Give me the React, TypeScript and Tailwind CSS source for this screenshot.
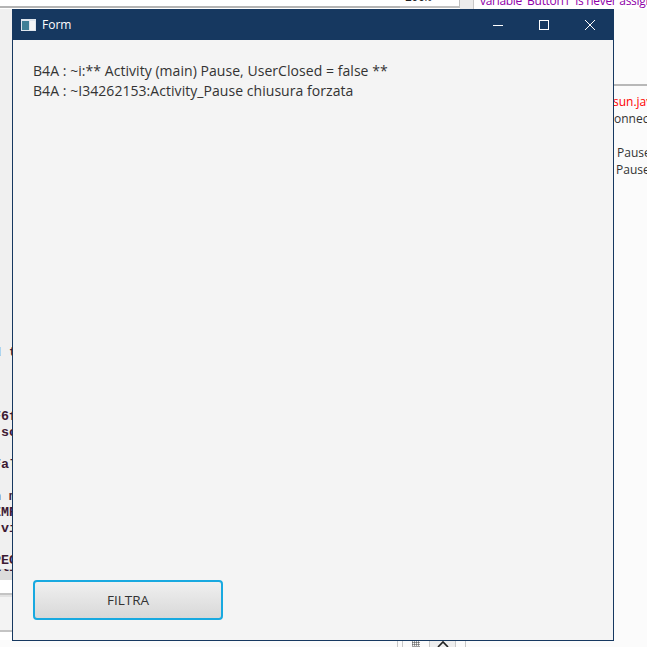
const mono = "font-['Liberation_Mono','DejaVu_Sans_Mono',monospace]";

// leftover code fragments peeking out from the IDE behind the form
const leftCode = ["d t", "", "", "", "F6f", " sc", "", "Fal", "", "n m", "EMR", " vi", "", "PEC"];
const rightLog = [
  { text: "sun.java", color: "text-[#ff0000]", inset: "pl-0" },
  { text: "onnect", color: "text-[#333333]", inset: "pl-[1px]" },
  { text: "", color: "", inset: "" },
  { text: "Pause", color: "text-[#333333]", inset: "pl-[4px]" },
  { text: "Pause", color: "text-[#333333]", inset: "pl-[3px]" },
];

function WindowButtons() {
  return (
    <div className="flex items-center h-full">
      <div className="w-[46px] h-full flex items-center justify-center">
        <svg width="12" height="12" viewBox="0 0 12 12">
          <path d="M1 6.5h10" stroke="#fff" strokeWidth="1" />
        </svg>
      </div>
      <div className="w-[46px] h-full flex items-center justify-center">
        <svg width="12" height="12" viewBox="0 0 12 12">
          <rect x="1.5" y="1.5" width="9" height="9" fill="none" stroke="#fff" strokeWidth="1" />
        </svg>
      </div>
      <div className="w-[46px] h-full flex items-center justify-center">
        <svg width="12" height="12" viewBox="0 0 12 12">
          <path d="M1 1l10 10M11 1L1 11" stroke="#fff" strokeWidth="1" />
        </svg>
      </div>
    </div>
  );
}

function TopStrip() {
  return (
    <div className="h-[9px] shrink-0 flex overflow-hidden bg-white">
      <div className="flex-1 h-[8px] border-b-2 border-[#b4b4b4]" />
      <div className="w-[60px] h-[8px] border-b-2 border-r border-[#c0c0c0] bg-white pl-[5px] overflow-hidden">
        <div className={`mt-[-8px] text-[11px] leading-[12px] font-bold text-[#222222] ${mono}`}>100%</div>
      </div>
      <div className="w-[14px] h-[9px] border-r border-[#c8c8c8] bg-[#ececec]" />
      <div className="w-[173px] pl-[6px] overflow-hidden">
        <div className="mt-[-7px] whitespace-pre text-[12px] leading-[16px] tracking-[-0.3px] text-[#8f00a8] font-['Open_Sans',sans-serif]">
          variable 'Button1' is never assigned
        </div>
      </div>
    </div>
  );
}

function LeftPane() {
  return (
    <div className="w-[12px] shrink-0 flex flex-col overflow-hidden bg-white">
      <div className="h-[560px] shrink-0 pt-[336px] bg-[#f0f0f0]">
        {leftCode.map((line, i) => (
          <div
            key={i}
            className={`h-[16px] whitespace-pre indent-[-7px] text-[13.33px] leading-[16px] font-bold text-[#3d1a33] ${mono}`}
          >
            {line}
          </div>
        ))}
      </div>
      <div className="h-[11px] shrink-0 bg-[#dcdcdc] overflow-hidden">
        <div className={`mt-[-9px] whitespace-pre indent-[-7px] text-[13.33px] leading-[16px] font-bold text-[#3d1a33] ${mono}`}>al1</div>
      </div>
      <div className="h-[13px] shrink-0 bg-white" />
      <div className="h-[2px] shrink-0 bg-[#c4c4c4]" />
      <div className="h-[2px] shrink-0 bg-[#e2e2e2]" />
      <div className="h-[33px] shrink-0 bg-[#f3f3f3]" />
      <div className="h-[2px] shrink-0 bg-[#c4c4c4]" />
    </div>
  );
}

function RightPane() {
  return (
    <div className="w-[34px] shrink-0 pt-[75px] flex flex-col bg-[#fbfbfb]">
      <div className="h-[2px] shrink-0 bg-[#b8b8b8]" />
      <div className="pt-[7px] flex flex-col font-['Open_Sans',sans-serif] overflow-hidden">
        {rightLog.map((l, i) => (
          <div key={i} className={`h-[17px] whitespace-pre text-[12px] leading-[17px] ${l.color} ${l.inset}`}>
            {l.text}
          </div>
        ))}
      </div>
    </div>
  );
}

function BottomStrip() {
  return (
    <div className="h-[7px] shrink-0 flex justify-end pr-[181px] bg-[#fbfbfb] overflow-hidden">
      <div className="flex h-full">
        <div className="w-[6px] border-x border-[#c8c8c8]" />
        <div className="w-[27px] flex justify-center border-r border-[#c8c8c8]">
          <svg width="8" height="7" viewBox="0 0 8 7">
            <path d="M0 1h8M0 3h8M0 5h8M1 0v7M3 0v7M5 0v7M7 0v7" stroke="#444" strokeWidth="1" strokeDasharray="1 1" />
          </svg>
        </div>
        <div className="w-[26px] flex justify-center border-r border-[#c8c8c8] bg-[#eeeeee]">
          <svg width="12" height="7" viewBox="0 0 12 7">
            <path d="M1 7l5-5 5 5" fill="none" stroke="#222" strokeWidth="1.6" />
          </svg>
        </div>
        <div className="w-[10px] border-r border-[#c8c8c8]" />
      </div>
    </div>
  );
}

export default function App() {
  return (
    <div className="relative w-[647px] h-[647px] overflow-hidden flex flex-col bg-[#fbfbfb]">
      <TopStrip />
      <div className="flex-1 flex min-h-0">
        <LeftPane />
        <div className="flex-1" />
        <RightPane />
      </div>
      <BottomStrip />

      {/* the Form window floats above the IDE */}
      <div className="absolute left-[12px] top-[9px] w-[602px] h-[632px] flex flex-col border border-[#163860] bg-[#f4f4f4] font-['Open_Sans',sans-serif]">
        <div className="h-[30px] shrink-0 bg-[#163860] flex items-center justify-between">
          <div className="flex items-center pl-[8px] gap-[6px]">
            <svg width="15" height="12" viewBox="0 0 15 12">
              <rect x="0" y="0" width="15" height="12" fill="#dfe6ee" />
              <rect x="1" y="2" width="7" height="9" fill="#3f7f96" />
              <rect x="9" y="2" width="5" height="9" fill="#f4f6f8" />
            </svg>
            <span className="text-[12px] leading-none text-white">Form</span>
          </div>
          <WindowButtons />
        </div>

        <div className="flex-1 flex flex-col justify-between pt-[21px] pb-[20px] pl-[20px]">
          <div className="text-[14px] leading-[20px] text-[#333333] tracking-[0.05px]">
            <div>B4A : ~i:** Activity (main) Pause, UserClosed = false **</div>
            <div>B4A : ~I34262153:Activity_Pause chiusura forzata</div>
          </div>
          <button className="w-[190px] h-[40px] rounded-[4px] border-2 border-[#18a9e0] bg-gradient-to-b from-[#f0f0f0] to-[#d8d8d8] text-[13.5px] text-[#333333]">
            FILTRA
          </button>
        </div>
      </div>
    </div>
  );
}
